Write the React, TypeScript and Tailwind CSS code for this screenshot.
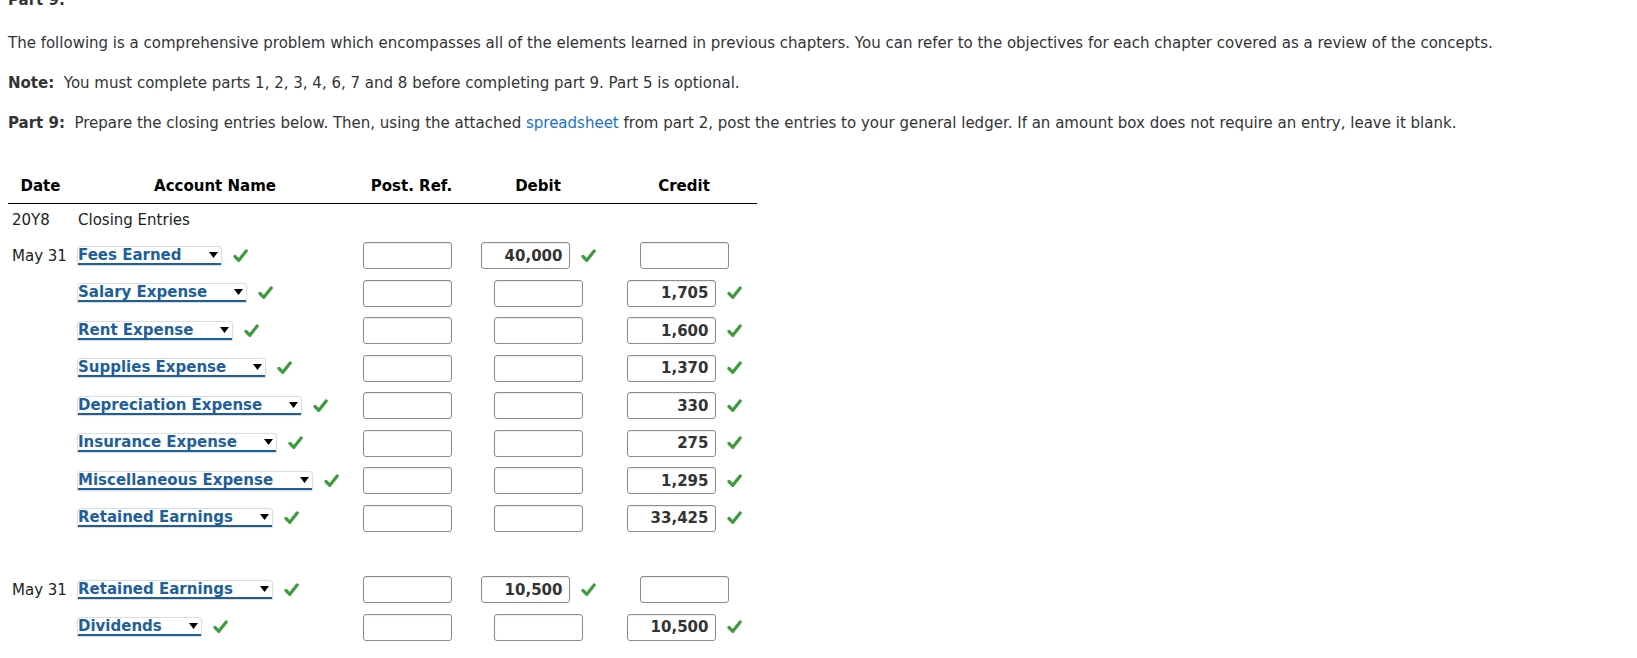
import React from 'react';

type Row = {
  date?: string;
  account: string;
  debit?: string;
  credit?: string;
};

const firstEntry: Row[] = [
  { date: 'May 31', account: 'Fees Earned', debit: '40,000' },
  { account: 'Salary Expense', credit: '1,705' },
  { account: 'Rent Expense', credit: '1,600' },
  { account: 'Supplies Expense', credit: '1,370' },
  { account: 'Depreciation Expense', credit: '330' },
  { account: 'Insurance Expense', credit: '275' },
  { account: 'Miscellaneous Expense', credit: '1,295' },
  { account: 'Retained Earnings', credit: '33,425' },
];

const secondEntry: Row[] = [
  { date: 'May 31', account: 'Retained Earnings', debit: '10,500' },
  { account: 'Dividends', credit: '10,500' },
];

function Check() {
  return (
    <svg width="15" height="14" viewBox="0 0 15 14" className="shrink-0">
      <path d="M2 7.5 L5.8 11.3 L13.2 2" fill="none" stroke="#3d9c3d" strokeWidth="3.2" strokeLinecap="round" strokeLinejoin="round" />
    </svg>
  );
}

function AccountSelect({ name }: { name: string }) {
  return (
    <div className="flex items-center gap-[12px]">
      <div className="flex items-center h-[18px] bg-white rounded-t-[3px] shadow-[0_0_1px_1px_rgba(0,0,0,0.15)] border-b-2 border-[#1f5f99]">
        <span className="font-bold text-[15px] leading-[16px] text-[#1f5f99]">{name}</span>
        <svg width="9" height="6" viewBox="0 0 9 6" className="ml-[27px] mr-[3px]">
          <path d="M0 0 L9 0 L4.5 6 Z" fill="#000" />
        </svg>
      </div>
      <Check />
    </div>
  );
}

function Box({ value }: { value?: string }) {
  return (
    <div className="w-[89px] h-[27px] border border-[#8c8c8c] rounded-[3px] bg-white shadow-[inset_0_1px_1px_rgba(0,0,0,0.08)] flex items-center justify-end pr-[6px] font-bold text-[15px] text-[#333]">
      {value}
    </div>
  );
}

function Amount({ value }: { value?: string }) {
  return (
    <div className="flex items-center justify-center gap-[11px]">
      <Box value={value} />
      {value && <Check />}
    </div>
  );
}

function EntryRow({ row }: { row: Row }) {
  return (
    <div className="grid grid-cols-[65px_284px_108px_146px_146px] h-[37.5px] items-center">
      <div className="pl-[4px] text-[15px] text-[#222]">{row.date}</div>
      <div className="pl-[5px]">
        <AccountSelect name={row.account} />
      </div>
      <div className="pl-[6px]">
        <Box />
      </div>
      <Amount value={row.debit} />
      <Amount value={row.credit} />
    </div>
  );
}

export default function App() {
  return (
    <div className="min-h-screen bg-white overflow-hidden pl-[8px] text-[#333]" style={{ fontFamily: '"DejaVu Sans", Verdana, sans-serif' }}>
      <div className="-mt-[10px] font-bold text-[15px] leading-[20px]">Part 9:</div>
      <p className="mt-[23px] text-[15px] leading-[20px]">
        The following is a comprehensive problem which encompasses all of the elements learned in previous chapters. You can refer to the objectives for each chapter covered as a review of the concepts.
      </p>
      <p className="mt-[20px] text-[15px] leading-[20px]">
        <span className="font-bold">Note:</span>&nbsp; You must complete parts 1, 2, 3, 4, 6, 7 and 8 before completing part 9. Part 5 is optional.
      </p>
      <p className="mt-[20px] text-[15px] leading-[20px]">
        <span className="font-bold">Part 9:</span>&nbsp; Prepare the closing entries below. Then, using the attached{' '}
        <span className="text-[#1a73c4]">spreadsheet</span> from part 2, post the entries to your general ledger. If an amount box does not require an entry, leave it blank.
      </p>

      <div className="w-[749px] mt-[36px]">
        <div className="grid grid-cols-[65px_284px_108px_146px_146px] h-[35px] items-center border-b border-black font-bold text-[15px] text-black">
          <div className="text-center">Date</div>
          <div className="text-center">Account Name</div>
          <div className="text-center pl-[1px]">Post. Ref.</div>
          <div className="text-center">Debit</div>
          <div className="text-center">Credit</div>
        </div>
        <div className="grid grid-cols-[65px_284px_108px_146px_146px] h-[33px] items-center text-[15px] text-[#222]">
          <div className="pl-[4px]">20Y8</div>
          <div className="pl-[5px]">Closing Entries</div>
        </div>
        {firstEntry.map((row, i) => (
          <EntryRow key={i} row={row} />
        ))}
        <div className="h-[34px]" />
        {secondEntry.map((row, i) => (
          <EntryRow key={i} row={row} />
        ))}
      </div>
    </div>
  );
}
